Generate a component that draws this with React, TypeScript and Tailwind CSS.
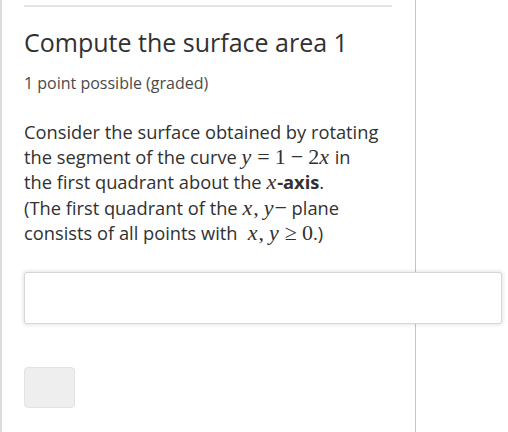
import React from 'react';

const sans = "font-['Open_Sans','Liberation_Sans',sans-serif]";

function M({ children }: { children: React.ReactNode }) {
  return <span className="font-['Liberation_Serif','DejaVu_Serif',serif] text-[22px] leading-none">{children}</span>;
}

function I({ children }: { children: React.ReactNode }) {
  return <i className="mr-[1px]">{children}</i>;
}

function Op({ children }: { children: React.ReactNode }) {
  return <span className="mx-[5px]">{children}</span>;
}

export default function App() {
  return (
    <div className={`${sans} min-h-[432px] w-[508px] overflow-hidden bg-white`}>
      <div className="min-h-[432px] w-[416px] border-l-2 border-r border-l-[#dcdcdc] border-r-[#c4c4c4] pl-[22px] pr-[23px] pt-[5px]">
        <div className="h-[2px] bg-[#e4e4e4]" />
        <h2 className="mt-[19px] text-[25px] leading-[32px] font-normal text-[#313131]">Compute the surface area 1</h2>
        <p className="mt-[14px] text-[16px] leading-[22px] text-[#4a4a4a]">1 point possible (graded)</p>
        <div className="mt-[25px] whitespace-nowrap text-[18.3px] leading-[25.2px] text-[#313131]">
          <p>
            Consider the surface obtained by rotating
            <br />
            the segment of the curve{' '}
            <M>
              <I>y</I>
              <Op>=</Op>1<Op>−</Op>2<I>x</I>
            </M>{' '}
            in
            <br />
            the first quadrant about the{' '}
            <M>
              <I>x</I>
            </M>
            <b>-axis</b>.
          </p>
          <p>
            (The first quadrant of the{' '}
            <M>
              <I>x</I>,<span className="ml-[5px]" />
              <I>y</I>−
            </M>{' '}
            plane
            <br />
            consists of all points with{' '}
            <M>
              &nbsp;<I>x</I>,<span className="ml-[5px]" />
              <I>y</I>
              <Op>≥</Op>0
            </M>
            .)
          </p>
        </div>
        <div className="relative z-10 mt-[27px] h-[52px] w-[478px] rounded-[3px] border border-[#d6d6d6] bg-white shadow-[0_0_3px_2px_rgba(0,0,0,0.07)]" />
        <button className="mt-[43px] h-[41px] w-[51px] rounded-[4px] border border-[#e2e2e2] bg-[#eeeeee]" />
      </div>
    </div>
  );
}
